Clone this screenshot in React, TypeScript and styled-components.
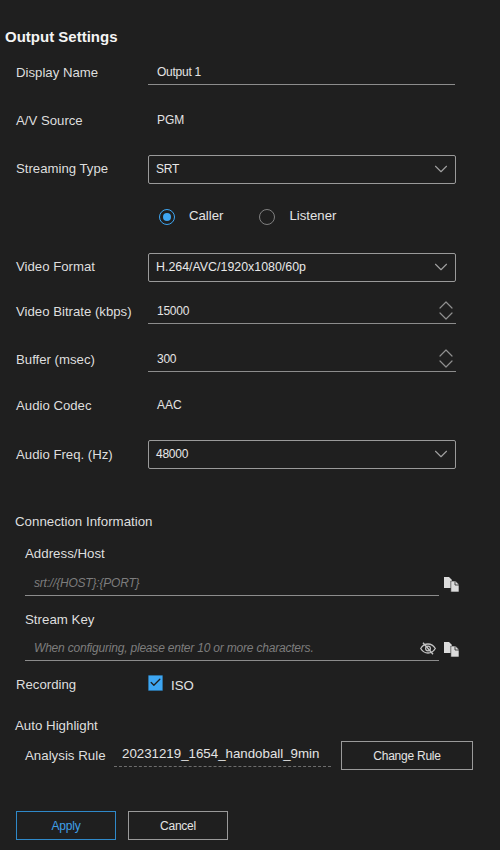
import styled, { createGlobalStyle } from "styled-components";
import { ChevronDown, ChevronUp, Check } from "lucide-react";

const GlobalStyle = createGlobalStyle`
  html, body {
    margin: 0;
    padding: 0;
    background: #1f1f1f;
  }
  body {
    font-family: "Liberation Sans", Arial, sans-serif;
    font-size: 12px;
    color: #e4e4e4;
  }
`;

const Page = styled.div`
  width: 500px;
  height: 850px;
  overflow: hidden;
  box-sizing: border-box;
  padding-top: 28px;
  background: #1f1f1f;
`;

const Title = styled.h1`
  margin: 0 0 12px 5px;
  height: 18px;
  line-height: 18px;
  font-size: 15px;
  font-weight: 700;
  color: #f4f4f4;
`;

const Row = styled.div<{ $top?: number }>`
  display: flex;
  align-items: center;
  height: 28px;
  margin-top: ${(p) => p.$top ?? 20}px;
  padding-left: 16px;
`;

const Label = styled.div<{ $lift?: number }>`
  width: 132px;
  flex: none;
  margin-top: ${(p) => -(p.$lift ?? 0)}px;
  font-size: 13.2px;
  color: #dedede;
`;

const Value = styled.div`
  padding-left: 9px;
  color: #e4e4e4;
`;

const UnderlineField = styled.div<{ $width?: number }>`
  display: flex;
  align-items: center;
  justify-content: space-between;
  box-sizing: border-box;
  width: ${(p) => p.$width ?? 307}px;
  height: 25px;
  padding: 0 2px 0 9px;
  border-bottom: 1px solid #8c8c8c;
  letter-spacing: -0.25px;
  color: #e4e4e4;
`;

const SelectBox = styled.div`
  display: flex;
  align-items: center;
  justify-content: space-between;
  box-sizing: border-box;
  width: 308px;
  height: 29px;
  padding: 0 3px 0 7px;
  border: 1px solid #9a9a9a;
  border-radius: 2px;
  letter-spacing: -0.25px;
  color: #e8e8e8;
`;

const FormatText = styled.span`
  font-size: 12.4px;
  letter-spacing: 0;
`;

const RadioRow = styled.div`
  display: flex;
  align-items: center;
  height: 28px;
  margin-top: 19px;
  padding-left: 159px;
`;

const Radio = styled.span<{ $on?: boolean }>`
  position: relative;
  box-sizing: border-box;
  width: 16px;
  height: 16px;
  margin: 2px 14px 0 0;
  border-radius: 50%;
  border: 1.5px solid ${(p) => (p.$on ? "#3ea6f2" : "#808080")};

  &::after {
    content: "";
    display: ${(p) => (p.$on ? "block" : "none")};
    position: absolute;
    inset: 3px;
    border-radius: 50%;
    background: #3ea6f2;
  }
`;

const RadioText = styled.span<{ $gap?: number }>`
  margin-right: ${(p) => p.$gap ?? 0}px;
  margin-top: -2px;
  font-size: 13.2px;
  color: #e4e4e4;
`;

const Stepper = styled.div`
  display: flex;
  flex-direction: column;
  margin-right: -4px;
  color: #8f8f8f;

  svg {
    display: block;
    margin: -6.5px 0;
  }
`;

const SelectArrow = styled.span`
  display: block;
  line-height: 0;
  color: #a0a0a0;
`;

const SectionTitle = styled.div<{ $top: number; $left?: number }>`
  height: 16px;
  line-height: 16px;
  margin-top: ${(p) => p.$top}px;
  margin-left: ${(p) => p.$left ?? 15}px;
  font-size: 13.3px;
  color: #dedede;
`;

const ConnectionRow = styled.div<{ $top?: number }>`
  display: flex;
  align-items: center;
  height: 25px;
  margin-top: ${(p) => p.$top ?? 0}px;
  padding-left: 25px;
`;

const RuleRow = styled(ConnectionRow)`
  height: 29px;
`;

const Placeholder = styled.span`
  font-style: italic;
  letter-spacing: -0.2px;
  color: #7d7d7d;
`;

const EyeSlot = styled.span`
  display: block;
  margin-right: 1px;
  line-height: 0;
`;

const CopyButton = styled.span`
  display: block;
  margin: 1px 0 0 5px;
  line-height: 0;
`;

const CheckBox = styled.span`
  display: flex;
  align-items: center;
  justify-content: center;
  box-sizing: border-box;
  width: 15px;
  height: 16px;
  margin-top: -3px;
  border: 1px solid #2b6f9f;
  border-radius: 1px;
  background: #3ea6f2;
  color: #1f1f1f;
`;

const CheckText = styled.span`
  margin: 3px 0 0 8px;
  font-size: 13.2px;
`;

const RuleLabel = styled.div`
  width: 89px;
  flex: none;
  font-size: 13.3px;
  color: #dedede;
`;

const RuleValue = styled.div`
  box-sizing: border-box;
  width: 217px;
  height: 25px;
  margin-top: -2px;
  line-height: 24px;
  padding-left: 8px;
  border-bottom: 1px dashed #6d6d6d;
  white-space: nowrap;
  font-size: 13.3px;
  color: #e4e4e4;
`;

const OutlineButton = styled.button<{ $width: number; $primary?: boolean; $left?: number }>`
  box-sizing: border-box;
  width: ${(p) => p.$width}px;
  height: 29px;
  margin-left: ${(p) => p.$left ?? 0}px;
  padding: 0;
  background: transparent;
  border: 1px solid ${(p) => (p.$primary ? "#2f89c9" : "#9a9a9a")};
  border-radius: 0;
  font: inherit;
  letter-spacing: -0.25px;
  color: ${(p) => (p.$primary ? "#3f9fe8" : "#e4e4e4")};
`;

const Footer = styled.div`
  display: flex;
  margin-top: 41px;
  padding-left: 16px;
`;

const Spinner = () => (
  <Stepper>
    <ChevronUp size={24} strokeWidth={1.2} />
    <ChevronDown size={24} strokeWidth={1.2} />
  </Stepper>
);

const Arrow = () => (
  <SelectArrow>
    <ChevronDown size={22} strokeWidth={1.2} />
  </SelectArrow>
);

const CopyIcon = () => (
  <CopyButton>
    <svg width="15" height="15" viewBox="0 0 15 15" aria-hidden="true">
      <path d="M0 0h5l3 3v8H0z" fill="#dcdcdc" />
      <path d="M6.800 4h4.700L15 7.500V15H6.800z" fill="#dcdcdc" stroke="#1f1f1f" strokeWidth="0.6" />
      <path d="M11 4.500v3.500h4" fill="none" stroke="#1f1f1f" strokeWidth="0.8" />
    </svg>
  </CopyButton>
);

const HiddenEye = () => (
  <EyeSlot>
    <svg width="16" height="13" viewBox="0 0 16 13" fill="none" stroke="#c4c4c4" aria-hidden="true">
      <path d="M.7 6.500C2.500 3.500 5 2 8 2s5.500 1.500 7.300 4.500C13.500 9.500 11 11 8 11S2.500 9.500.7 6.500z" strokeWidth="1.3" />
      <circle cx="8" cy="6.500" r="2.400" strokeWidth="1.200" />
      <path d="M3 .7 13 12.300" strokeWidth="1.400" />
    </svg>
  </EyeSlot>
);

export default function App() {
  return (
    <Page>
      <GlobalStyle />
      <Title>Output Settings</Title>

      <Row $top={0}>
        <Label>Display Name</Label>
        <UnderlineField>Output 1</UnderlineField>
      </Row>
      <Row>
        <Label>A/V Source</Label>
        <Value>PGM</Value>
      </Row>
      <Row $top={21}>
        <Label $lift={2}>Streaming Type</Label>
        <SelectBox>
          SRT
          <Arrow />
        </SelectBox>
      </Row>
      <RadioRow>
        <Radio $on />
        <RadioText $gap={36}>Caller</RadioText>
        <Radio />
        <RadioText>Listener</RadioText>
      </RadioRow>
      <Row $top={23}>
        <Label $lift={2}>Video Format</Label>
        <SelectBox>
          <FormatText>H.264/AVC/1920x1080/60p</FormatText>
          <Arrow />
        </SelectBox>
      </Row>
      <Row $top={16}>
        <Label>Video Bitrate (kbps)</Label>
        <UnderlineField $width={308}>
          15000
          <Spinner />
        </UnderlineField>
      </Row>
      <Row>
        <Label>Buffer (msec)</Label>
        <UnderlineField $width={308}>
          300
          <Spinner />
        </UnderlineField>
      </Row>
      <Row $top={18}>
        <Label>Audio Codec</Label>
        <Value>AAC</Value>
      </Row>
      <Row $top={21}>
        <Label>Audio Freq. (Hz)</Label>
        <SelectBox>
          48000
          <Arrow />
        </SelectBox>
      </Row>

      <SectionTitle $top={46}>Connection Information</SectionTitle>
      <SectionTitle $top={16} $left={25}>Address/Host</SectionTitle>
      <ConnectionRow $top={9}>
        <UnderlineField $width={414}>
          <Placeholder>srt://{"{HOST}"}:{"{PORT}"}</Placeholder>
        </UnderlineField>
        <CopyIcon />
      </ConnectionRow>
      <SectionTitle $top={16} $left={25}>Stream Key</SectionTitle>
      <ConnectionRow $top={8}>
        <UnderlineField $width={414}>
          <Placeholder>When configuring, please enter 10 or more characters.</Placeholder>
          <HiddenEye />
        </UnderlineField>
        <CopyIcon />
      </ConnectionRow>

      <Row $top={9}>
        <Label>Recording</Label>
        <CheckBox>
          <Check size={13} strokeWidth={2.4} />
        </CheckBox>
        <CheckText>ISO</CheckText>
      </Row>

      <SectionTitle $top={20}>Auto Highlight</SectionTitle>
      <RuleRow $top={7}>
        <RuleLabel>Analysis Rule</RuleLabel>
        <RuleValue>20231219_1654_handoball_9min</RuleValue>
        <OutlineButton $width={132} $left={10}>Change Rule</OutlineButton>
      </RuleRow>

      <Footer>
        <OutlineButton $width={100} $primary>Apply</OutlineButton>
        <OutlineButton $width={100} $left={12}>Cancel</OutlineButton>
      </Footer>
    </Page>
  );
}
